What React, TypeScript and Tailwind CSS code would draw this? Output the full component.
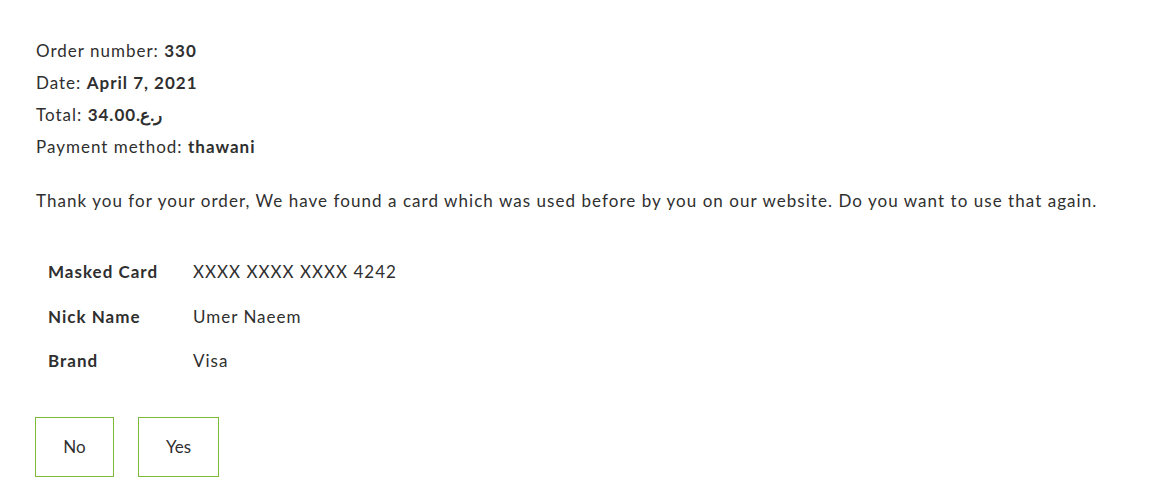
import React from "react";

export default function App() {
  const font = { fontFamily: '"Lato", "Noto Sans", sans-serif' };
  return (
    <div className="min-h-screen bg-white text-[#2f2f2f]" style={font}>
      <div className="px-[36px] pt-[35px]">
        <div className="text-[17px] leading-[32px] tracking-[1px]">
          <div>Order number: <strong className="font-bold">330</strong></div>
          <div>Date: <strong className="font-bold">April 7, 2021</strong></div>
          <div>
            Total:{" "}
            <strong className="font-bold">
              34.00<bdi dir="rtl">ر.ع.</bdi>
            </strong>
          </div>
          <div>Payment method: <strong className="font-bold">thawani</strong></div>
        </div>
        <p className="mt-[24px] text-[17px] leading-[28px] tracking-[1.05px]">
          Thank you for your order, We have found a card which was used before by you on our website. Do you want to use that again.
        </p>
        <table className="mt-[34px] text-[17px] tracking-[1px]">
          <tbody>
            <tr>
              <td className="pl-[12px] w-[157px] h-[46px] font-bold">Masked Card</td>
              <td>XXXX XXXX XXXX 4242</td>
            </tr>
            <tr>
              <td className="pl-[12px] w-[157px] h-[44px] font-bold">Nick Name</td>
              <td>Umer Naeem</td>
            </tr>
            <tr>
              <td className="pl-[12px] w-[157px] h-[44px] font-bold">Brand</td>
              <td>Visa</td>
            </tr>
          </tbody>
        </table>
        <div className="mt-[34px] -ml-[1px] flex gap-[24px]">
          <button className="w-[79px] h-[60px] border border-[#7cbb3a] text-[17px]">No</button>
          <button className="w-[81px] h-[60px] border border-[#7cbb3a] text-[17px]">Yes</button>
        </div>
      </div>
    </div>
  );
}
